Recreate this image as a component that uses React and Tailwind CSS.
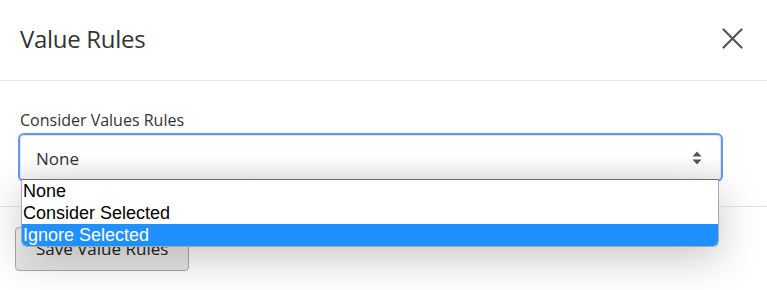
import React from 'react'

const options = ['None', 'Consider Selected', 'Ignore Selected']

const CloseIcon = () => (
    <svg width="21" height="21" viewBox="0 0 21 21" fill="none">
        <path d="M1.5 1.5L19.5 19.5M19.5 1.5L1.5 19.5" stroke="#555" strokeWidth="2.2" strokeLinecap="round"/>
    </svg>
)

const SortArrows = () => (
    <svg width="10" height="14" viewBox="0 0 10 14">
        <path d="M5 0.5L9.5 5.5H0.5Z" fill="#555"/>
        <path d="M5 13.5L9.5 8.5H0.5Z" fill="#555"/>
    </svg>
)

const App = () => {
    const selected = 2

    return (
        <div className="relative w-full h-[290px] bg-white overflow-hidden text-[#333]"
             style={{fontFamily: '"Open Sans", "Noto Sans", sans-serif'}}>
            <div className="flex items-center justify-between h-[81px] pl-[20px] pr-[24px] border-b border-[#e3e3e3]">
                <h2 className="text-[24px] leading-none tracking-[-0.3px] text-[#333] -mt-[3px]">Value Rules</h2>
                <button className="p-0 -mt-[4px]"><CloseIcon/></button>
            </div>

            <div className="pl-[18px] pr-[44px] pt-[28px] pb-[24px] border-b border-[#e3e3e3]">
                <label className="block pl-[2px] text-[16px] leading-[22px] mb-[2px]">Consider Values Rules</label>
                <div className="relative">
                    <div className="flex items-center justify-between h-[49px] pl-[16px] pr-[19px] rounded-[6px] border-2 border-[#639af0] bg-gradient-to-b from-white via-white to-[#f1f1f1] shadow-[inset_0_0_0_1px_#dfe6f2]">
                        <span className="text-[17px] text-[#333] pt-[3px]">None</span>
                        <SortArrows/>
                    </div>
                    <ul className="absolute z-10 left-[3px] right-[4px] top-[46px] bg-white border border-[#a9a9a9] border-t-[#6f6f6f] rounded-b-[6px] overflow-hidden shadow-[0_12px_40px_rgba(0,0,0,0.22)]"
                        style={{fontFamily: '"Liberation Sans", Arial, sans-serif'}}>
                        {options.map((opt, i) => (
                            <li key={opt}
                                className={`h-[22px] leading-[22px] text-[18px] pl-[1px] ${i === selected ? 'bg-[#1e90ff] text-white' : 'text-black'}`}>
                                {opt}
                            </li>
                        ))}
                    </ul>
                </div>
            </div>

            <div className="px-[15px] pt-[20px]">
                <button className="h-[44px] px-[20px] rounded-[4px] border border-[#a8a8a8] bg-gradient-to-b from-[#f7f7f7] to-[#e4e4e4] text-[17px] text-[#222]">
                    Save Value Rules
                </button>
            </div>
        </div>
    )
}

export default App
